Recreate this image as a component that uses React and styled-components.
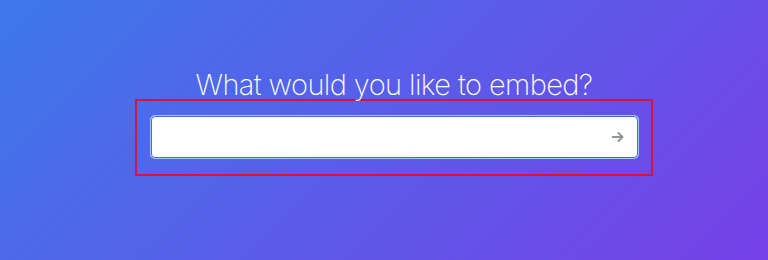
import React from "react";
import styled, { createGlobalStyle } from "styled-components";

const Global = createGlobalStyle`
  html, body { margin: 0; padding: 0; }
  body {
    width: 768px;
    height: 260px;
    overflow: hidden;
    font-family: Inter, "Liberation Sans", sans-serif;
  }
`;

const Page = styled.div`
  width: 768px;
  height: 260px;
  box-sizing: border-box;
  background: linear-gradient(135deg, #3e78eb 0%, #7740e8 100%);
  display: flex;
  flex-direction: column;
  align-items: center;
  padding: 67px 0 0 20px;
`;

const Heading = styled.h1`
  margin: 0;
  font-family: Inter, "Liberation Sans", sans-serif;
  font-weight: 200;
  font-size: 29px;
  line-height: 36px;
  color: #ffffff;
  letter-spacing: -0.6px;
  position: relative;
  z-index: 1;
`;

const Highlight = styled.div`
  width: 518px;
  box-sizing: border-box;
  border: 2px solid #d4143c;
  padding: 15px 13px 16px 14px;
  margin-top: -4px;
`;

const Field = styled.div`
  height: 42px;
  box-sizing: border-box;
  background: #ffffff;
  border: 1px solid #3b6fd0;
  border-radius: 4px;
  box-shadow: 0 0 0 1px #a7c5f7;
  display: flex;
  align-items: center;
  padding: 0 12px 0 12px;
`;

const Input = styled.input`
  flex: 1;
  border: none;
  outline: none;
  background: transparent;
  font-family: Inter, "Liberation Sans", sans-serif;
  font-size: 16px;
  color: #333;
`;

const Go = styled.button`
  border: none;
  background: transparent;
  padding: 0;
  width: 14px;
  height: 14px;
  display: flex;
  align-items: center;
  justify-content: center;
  cursor: pointer;
`;

export default function App() {
  return (
    <>
      <Global />
      <Page>
        <Heading>What would you like to embed?</Heading>
        <Highlight>
          <Field>
            <Input type="text" aria-label="URL" />
            <Go aria-label="Submit">
              <svg width="12" height="10" viewBox="0 0 12 10" fill="none">
                <path d="M0.5 5H10.5M6.5 1L10.5 5L6.5 9" stroke="#8a949c" strokeWidth="1.8" strokeLinecap="round" strokeLinejoin="round" />
              </svg>
            </Go>
          </Field>
        </Highlight>
      </Page>
    </>
  );
}
